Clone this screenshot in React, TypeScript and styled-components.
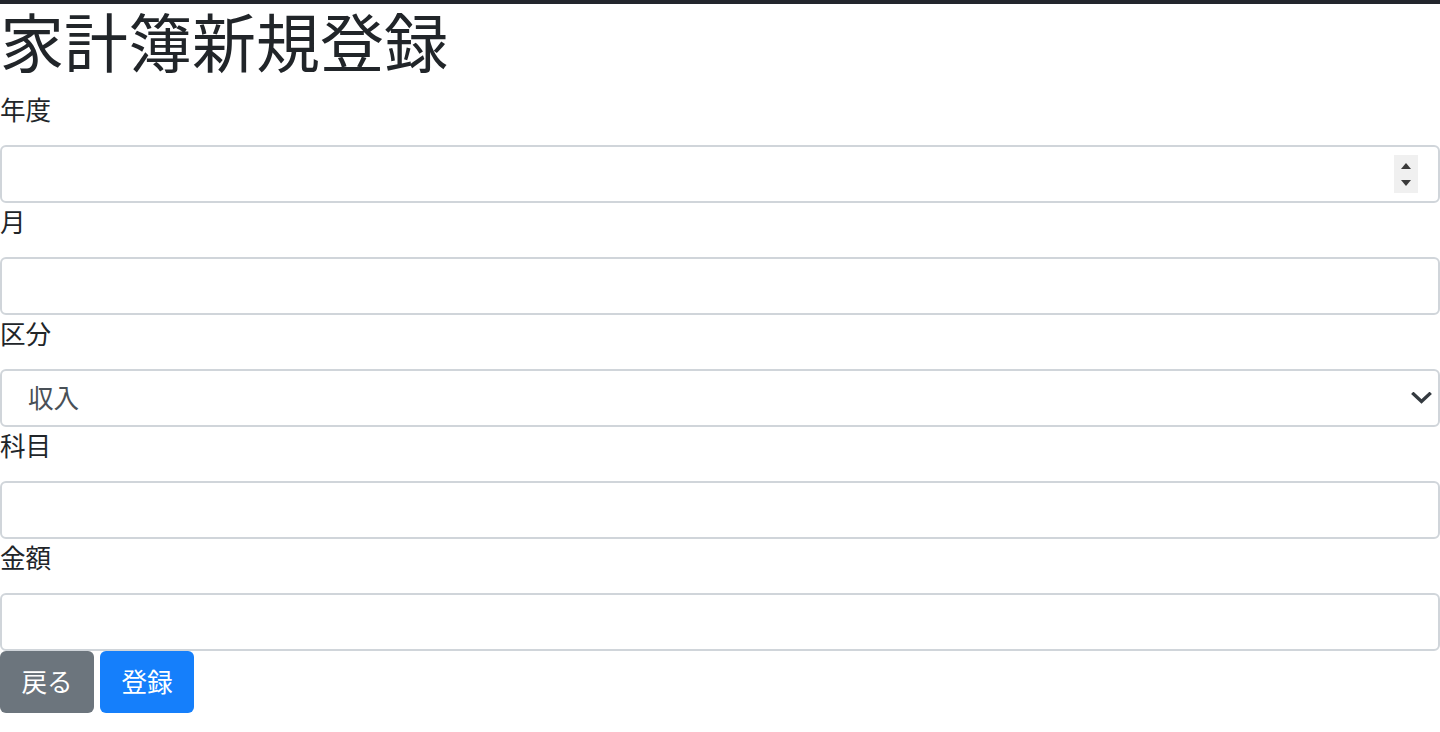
import styled, { createGlobalStyle } from 'styled-components';

const GlobalStyle = createGlobalStyle`
  html, body {
    margin: 0;
    padding: 0;
    background: #fff;
  }
  body {
    font-family: "Noto Sans CJK JP", "Noto Sans", "Liberation Sans", sans-serif;
    color: #212529;
  }
  * {
    box-sizing: border-box;
  }
`;

const TopBar = styled.div`
  height: 4px;
  background: #23262d;
`;

const Page = styled.main`
  display: flex;
  flex-direction: column;
`;

const Title = styled.h1`
  margin: 0 0 16px;
  font-size: 64px;
  line-height: 71px;
  font-weight: 400;
  color: #212529;
`;

const Field = styled.div`
  display: flex;
  flex-direction: column;
`;

const Label = styled.label`
  display: block;
  font-size: 25.6px;
  line-height: 35px;
  margin-bottom: 19px;
  color: #212529;
`;

const InputWrap = styled.div`
  position: relative;
`;

const Input = styled.input`
  display: block;
  width: 100%;
  height: 58px;
  padding: 0 19px;
  font-family: inherit;
  font-size: 25.6px;
  color: #495057;
  background: #fff;
  border: 2px solid #d0d5da;
  border-radius: 6px;
  outline: none;
  appearance: none;

  &::-webkit-inner-spin-button,
  &::-webkit-outer-spin-button {
    -webkit-appearance: none;
    margin: 0;
  }
`;

const Spinner = styled.div`
  position: absolute;
  top: 10px;
  right: 22px;
  width: 24px;
  height: 38px;
  background: #f0f0f0;
  display: flex;
  flex-direction: column;
  align-items: center;
  justify-content: center;
  gap: 11px;
  pointer-events: none;
`;

const Arrow = styled.span<{ $up?: boolean }>`
  width: 0;
  height: 0;
  border-left: 5.5px solid transparent;
  border-right: 5.5px solid transparent;
  ${({ $up }) =>
    $up ? 'border-bottom: 6px solid #3a3a3a;' : 'border-top: 6px solid #3a3a3a;'}
`;

const Select = styled.select`
  display: block;
  width: 100%;
  height: 58px;
  padding: 0 60px 4px 26px;
  font-family: inherit;
  font-size: 25.6px;
  color: #495057;
  background: #fff;
  border: 2px solid #d0d5da;
  border-radius: 6px;
  outline: none;
  appearance: none;
`;

const Chevron = styled.svg`
  position: absolute;
  top: 50%;
  right: 8px;
  width: 21px;
  height: 12px;
  margin-top: -6px;
  pointer-events: none;
`;

const Actions = styled.div`
  display: flex;
  gap: 6px;
`;

const Button = styled.button<{ $variant: 'secondary' | 'primary' }>`
  width: 94px;
  height: 62px;
  padding: 0 0 4px;
  font-family: inherit;
  font-size: 25.6px;
  color: #fff;
  border: none;
  border-radius: 6px;
  background: ${({ $variant }) => ($variant === 'primary' ? '#157ffb' : '#6c757d')};
  cursor: pointer;
`;

const fields = [
  { id: 'month', label: '月', type: 'text' },
  { id: 'subject', label: '科目', type: 'text' },
  { id: 'amount', label: '金額', type: 'text' },
];

export default function App() {
  return (
    <>
      <GlobalStyle />
      <TopBar />
      <Page>
        <Title>家計簿新規登録</Title>

        <Field>
          <Label htmlFor="nendo">年度</Label>
          <InputWrap>
            <Input id="nendo" type="number" />
            <Spinner>
              <Arrow $up />
              <Arrow />
            </Spinner>
          </InputWrap>
        </Field>

        <Field>
          <Label htmlFor={fields[0].id}>{fields[0].label}</Label>
          <Input id={fields[0].id} type={fields[0].type} />
        </Field>

        <Field>
          <Label htmlFor="kubun">区分</Label>
          <InputWrap>
            <Select id="kubun" defaultValue="income">
              <option value="income">収入</option>
              <option value="expense">支出</option>
            </Select>
            <Chevron viewBox="0 0 21 12">
              <path
                d="M2.5 2 L10.5 9.5 L18.5 2"
                fill="none"
                stroke="#343a40"
                strokeWidth="3.4"
                strokeLinecap="square"
                strokeLinejoin="miter"
              />
            </Chevron>
          </InputWrap>
        </Field>

        {fields.slice(1).map((f) => (
          <Field key={f.id}>
            <Label htmlFor={f.id}>{f.label}</Label>
            <Input id={f.id} type={f.type} />
          </Field>
        ))}

        <Actions>
          <Button $variant="secondary">戻る</Button>
          <Button $variant="primary">登録</Button>
        </Actions>
      </Page>
    </>
  );
}
